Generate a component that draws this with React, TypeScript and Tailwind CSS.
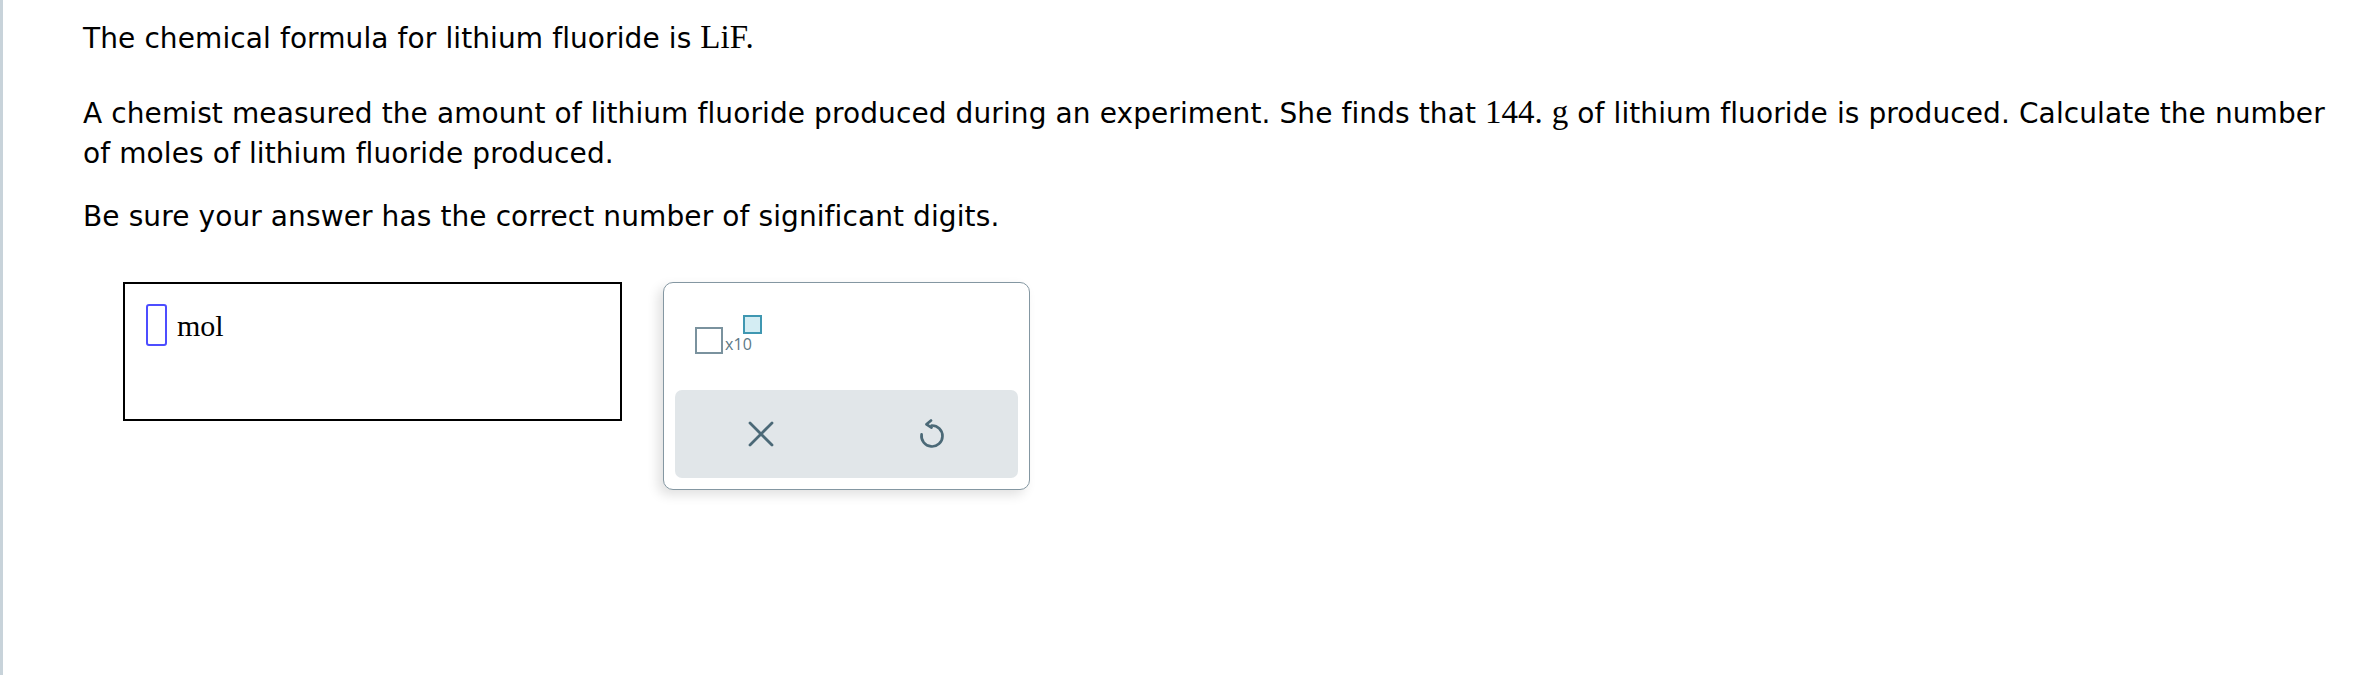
const sans = "font-['DejaVu_Sans',Verdana,sans-serif] [font-variant-ligatures:none] tracking-[0.1px]";
const serif = "font-['Liberation_Serif','Times_New_Roman',serif] text-[33px] leading-none tracking-normal";

function TimesTen() {
  return (
    <div className="relative w-[70px] h-[40px]">
      <div className="absolute left-0 top-[12px] w-[28px] h-[27px] border-2 border-[#7a929e]" />
      <span className="absolute left-[30px] top-[19px] text-[16px] leading-[20px] text-[#5b7885] font-['Open_Sans',sans-serif]">
        x10
      </span>
      <div className="absolute left-[48px] top-0 w-[19px] h-[19px] border-2 border-[#3f97b1] bg-[#d4edf3]" />
    </div>
  );
}

function ClearIcon() {
  return (
    <svg width="26" height="26" viewBox="0 0 26 26" fill="none" stroke="#4b6977" strokeWidth="2.8" strokeLinecap="round">
      <path d="M2 2 L24 24 M24 2 L2 24" />
    </svg>
  );
}

function UndoIcon() {
  return (
    <svg width="30" height="30" viewBox="0 0 30 30" fill="none" stroke="#4b6977" strokeWidth="2.7" strokeLinecap="round" strokeLinejoin="round">
      <path d="M14.5 6.5 A10.5 10.5 0 1 1 4.6 15.4" />
      <path d="M14 1.5 L9.5 5.3 L14.5 8.6" />
    </svg>
  );
}

export default function App() {
  return (
    <div className="min-h-screen bg-white border-l-[3px] border-[#c8d3da]">
      <div className={`${sans} text-[28px] leading-[40px] text-black pl-[80px] pr-[20px] pt-[19px]`}>
        <p>
          The chemical formula for lithium fluoride is <span className={serif}>LiF.</span>
        </p>
        <p className="mt-[35px]">
          A chemist measured the amount of lithium fluoride produced during an experiment. She finds that{" "}
          <span className={serif}>144.</span> <span className={serif}>g</span> of lithium fluoride is produced.
          Calculate the number
          <br />
          of moles of lithium fluoride produced.
        </p>
        <p className="mt-[23px]">Be sure your answer has the correct number of significant digits.</p>

        <div className="mt-[45px] flex items-start">
          <div className="ml-[40px] w-[499px] h-[139px] border-2 border-black flex items-start pl-[21px] pt-[20px]">
            <div className="w-[21px] h-[42px] border-2 border-[#4d4dff] rounded-[3px]" />
            <span className="font-['Liberation_Serif','Times_New_Roman',serif] text-[30px] leading-[34px] ml-[10px] mt-[5px] tracking-normal">
              mol
            </span>
          </div>

          <div className="ml-[41px] w-[367px] h-[208px] border-[1.5px] border-[#8497a2] rounded-[10px] bg-white shadow-[-5px_5px_12px_rgba(0,0,0,0.12)] p-[11px] flex flex-col">
            <div className="h-[96px] pl-[20px] pt-[21px]">
              <TimesTen />
            </div>
            <div className="flex-1 bg-[#e1e6e9] rounded-[7px] flex">
              <div className="flex-1 flex items-center justify-center">
                <ClearIcon />
              </div>
              <div className="flex-1 flex items-center justify-center">
                <UndoIcon />
              </div>
            </div>
          </div>
        </div>
      </div>
    </div>
  );
}
